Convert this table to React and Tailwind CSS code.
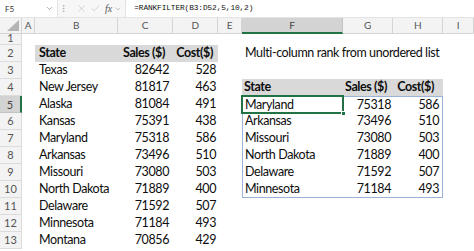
import React from 'react';
import { ChevronDown, EllipsisVertical, X, Check } from 'lucide-react';

const left = [
  ['Texas', 82642, 528],
  ['New Jersey', 81817, 463],
  ['Alaska', 81084, 491],
  ['Kansas', 75391, 438],
  ['Maryland', 75318, 586],
  ['Arkansas', 73496, 510],
  ['Missouri', 73080, 503],
  ['North Dakota', 71889, 400],
  ['Delaware', 71592, 507],
  ['Minnesota', 71184, 493],
  ['Montana', 70856, 429],
];

const right = left.slice(4, 10);
const cols = ['A', 'B', 'C', 'D', 'E', 'F', 'G', 'H', 'I'];

function FormulaBar() {
  return (
    <div className="flex h-[18px] items-center bg-[#f7f7f7] border-b border-[#e3e3e3]">
      <div className="flex h-full w-[58px] items-center justify-between bg-white pl-[5px] pr-[3px] border-r border-[#e3e3e3]">
        <span className="text-[8px] tracking-normal text-[#333]">F5</span>
        <ChevronDown size={9} strokeWidth={1.5} className="text-[#666]" />
      </div>
      <EllipsisVertical size={9} strokeWidth={1.5} className="ml-[1px] text-[#999]" />
      <X size={11} strokeWidth={1} className="ml-[8px] text-[#aaa]" />
      <Check size={11} strokeWidth={1} className="ml-[3px] text-[#aaa]" />
      <span className="ml-[4px] font-['Liberation_Serif',serif] text-[10px] italic tracking-normal text-[#555]">fx</span>
      <ChevronDown size={8} strokeWidth={1.5} className="ml-[2px] text-[#888]" />
      <div className="ml-[3px] flex h-full flex-1 items-center bg-white pl-[8px] border-l border-[#e3e3e3]">
        <span className="font-['Liberation_Mono',monospace] text-[7.8px] tracking-[-0.1px] text-[#111]">=RANKFILTER(B3:D52,5,10,2)</span>
      </div>
    </div>
  );
}

function ColHeader() {
  return (
    <>
      <div className="relative h-[16px] bg-[#f3f3f3] border-b border-r border-[#d4d4d4]">
        <svg width="12" height="11" viewBox="0 0 12 11" className="absolute bottom-[2px] right-[2px]">
          <polygon points="12,0 12,11 0,11" fill="#b4b4b4" />
        </svg>
      </div>
      {cols.map((c) =>
        c === 'F' ? (
          <div key={c} className="flex h-[16px] items-center justify-center bg-[#d3d3d3] border-b-2 border-[#217346] border-r border-r-[#c4c4c4] text-[10px] text-[#444]">{c}</div>
        ) : (
          <div key={c} className="flex h-[16px] items-center justify-center bg-[#f3f3f3] border-b border-r border-[#d4d4d4] text-[10px] text-[#555]">{c}</div>
        )
      )}
    </>
  );
}

function cellFor(r, c) {
  // returns [content, className]
  const base = 'flex h-full items-center overflow-visible whitespace-nowrap';
  if (r === 2) {
    if (c === 'B') return ['State', `${base} bg-[#d9d9d9] pl-[4px] font-bold`];
    if (c === 'C') return ['Sales ($)', `${base} justify-end bg-[#d9d9d9] pr-[8px] font-bold`];
    if (c === 'D') return ['Cost($)', `${base} justify-end bg-[#d9d9d9] pr-[5px] font-bold`];
    if (c === 'F') return ['Multi-column rank from unordered list', `${base} pl-[3px]`];
  }
  if (r >= 3 && r <= 13) {
    const row = left[r - 3];
    if (c === 'B') return [row[0], `${base} pl-[4px]`];
    if (c === 'C') return [row[1], `${base} justify-end pr-[4px]`];
    if (c === 'D') return [row[2], `${base} justify-end pr-[2px]`];
  }
  if (r === 4) {
    if (c === 'F') return ['State', `${base} bg-[#d9d9d9] pl-[2px] font-bold`];
    if (c === 'G') return ['Sales ($)', `${base} justify-end bg-[#d9d9d9] pr-[6px] font-bold`];
    if (c === 'H') return ['Cost($)', `${base} justify-end bg-[#d9d9d9] pr-[9px] font-bold`];
  }
  if (r >= 5 && r <= 10) {
    const row = right[r - 5];
    const last = r === 10 ? ' border-b border-[#9db2d8]' : '';
    const first = r === 5 ? ' border-t border-[#9db2d8]' : '';
    if (c === 'F') return [row[0], `${base} pl-[2px] border-l border-[#9db2d8]${last}${first}`];
    if (c === 'G') return [row[1], `${base} justify-end pr-[2px]${last}${first}`];
    if (c === 'H') return [row[2], `${base} justify-end pr-[3px] border-r border-[#9db2d8]${last}${first}`];
  }
  return ['', base];
}

function Row({ r }) {
  const h = r === 1 ? 'h-[11px]' : 'h-[17px]';
  const active = r === 5;
  return (
    <>
      <div
        className={
          active
            ? `${h} flex items-center justify-center overflow-hidden bg-[#d3d3d3] border-b border-[#c4c4c4] border-r-2 border-r-[#217346] text-[11px] tracking-normal text-[#444]`
            : `${h} flex items-end justify-center overflow-hidden bg-[#f3f3f3] border-b border-r border-[#dcdcdc] text-[11px] tracking-normal text-[#555]`
        }
      >
        <span className={r === 1 ? 'mb-[-2px] leading-[17px]' : 'leading-[17px]'}>{r}</span>
      </div>
      {cols.map((c) => {
        const [content, cls] = cellFor(r, c);
        if (active && c === 'F') {
          return (
            <div key={c} className={`${h} relative`}>
              <div className={cls}>{content}</div>
              <div className="pointer-events-none absolute inset-[-1px] border-2 border-[#217346]" />
              <div className="absolute bottom-[-3px] right-[-3px] h-[5px] w-[5px] bg-[#217346] border border-white" />
            </div>
          );
        }
        return (
          <div key={c} className={`${h}`}>
            <div className={cls}>{content}</div>
          </div>
        );
      })}
    </>
  );
}

export default function App() {
  const rows = [1, 2, 3, 4, 5, 6, 7, 8, 9, 10, 11, 12, 13];
  return (
    <div className="h-[251px] w-[474px] overflow-hidden bg-white font-['Lato','Liberation_Sans',sans-serif] text-[12.5px] tracking-[-0.4px] text-[#0d0d0d]">
      <FormulaBar />
      <div className="grid grid-cols-[22px_13px_83px_55px_45px_24px_101px_50px_50px_1fr]">
        <ColHeader />
        {rows.map((r) => (
          <Row key={r} r={r} />
        ))}
      </div>
    </div>
  );
}
